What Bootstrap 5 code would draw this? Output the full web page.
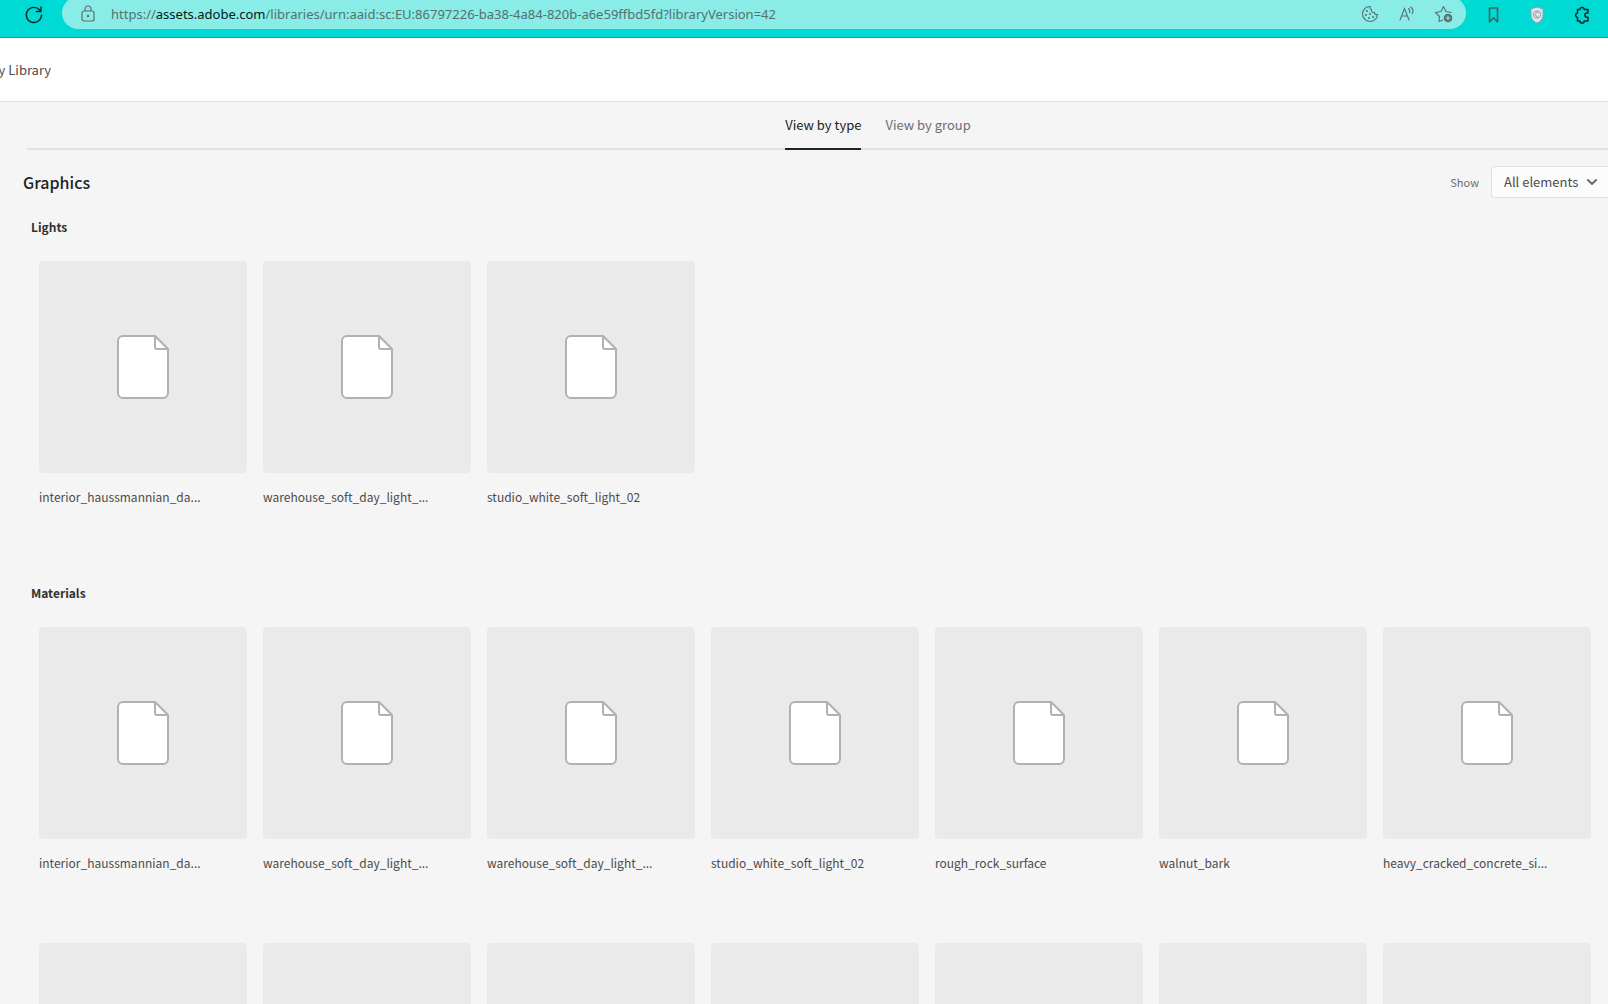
<!DOCTYPE html>
<html lang="en">
<head>
<meta charset="utf-8">
<meta name="viewport" content="width=device-width, initial-scale=1">
<title>My Library</title>
<link href="https://cdn.jsdelivr.net/npm/bootstrap@5.3.0/dist/css/bootstrap.min.css" rel="stylesheet">
<style>
body{font-family:"Noto Sans CJK SC","Open Sans",sans-serif;font-size:13px;line-height:20px;color:#4b4b4b;background:#f5f5f5}
.browser-bar{background:#00dad4;border-bottom:1px solid #00a9a6;height:38px;gap:18px;padding:0 16px 8px 24px}
.browser-bar .btn{width:20px;height:20px;line-height:0}
.browser-bar svg{display:block}
.address{background:#8aece6;height:32px;margin-top:-4px;padding:2px 12px 0 17px;color:#5a7472}
.address-text{font-family:"Noto Sans",sans-serif;font-size:13px;color:#52716f;outline:0;margin-left:12px}
.address-text b{font-weight:400;color:#00201f}
.address-tools{gap:17px}
.browser-tools{gap:24px}
.app-head{height:64px;border-bottom:1px solid #e1e1e1}
.crumb{margin-left:-12px;color:#4b4b4b}
.view-tabs{margin-left:27px;padding-left:121px;border-bottom:2px solid #e1e1e1;gap:24px}
.view-tabs .nav-link{padding:13px 0;border-bottom:2px solid transparent;margin-bottom:-2px;color:#6e6e6e;line-height:20px}
.view-tabs .nav-link.active{color:#222;border-color:#222}
.toolbar{padding:16px 0 13px 23px}
.toolbar h1{font-size:16px;line-height:24px;font-weight:500;color:#222}
.toolbar label{font-size:11px;color:#6e6e6e}
.filter{width:117px;height:32px;padding:0 28px 0 12px;font-size:13px;color:#4b4b4b;background-color:#fcfcfc;border:1px solid #e1e1e1;border-right:0;border-radius:4px 0 0 4px;background-position:right 10px center;background-size:12px 12px;background-image:url("data:image/svg+xml,%3Csvg xmlns='http://www.w3.org/2000/svg' viewBox='0 0 12 12'%3E%3Cpath d='M2 4l4 4 4-4' fill='none' stroke='%236e6e6e' stroke-width='2' stroke-linecap='round' stroke-linejoin='round'/%3E%3C/svg%3E")}
.group-title{font-size:12px;line-height:20px;font-weight:700;color:#323232;padding:6px 0 24px 31px}
.tiles{display:grid;grid-template-columns:repeat(7,minmax(0,1fr));column-gap:16px;padding:0 17px 0 39px}
.tile{height:316px}
.thumb{height:212px;border-radius:4px;background:#eaeaea}
.caption-text{margin-top:14px;font-size:12px;line-height:20px;color:#4b4b4b}
</style>
</head>
<body class="vh-100 overflow-hidden">
<svg class="d-none" aria-hidden="true">
  <symbol id="file" viewBox="0 0 52 64"><path d="M6 1H38L51 14V58a5 5 0 0 1-5 5H6a5 5 0 0 1-5-5V6a5 5 0 0 1 5-5Z" fill="#fff" stroke="#b1b1b1" stroke-width="2"/><path d="M38 1V12a2 2 0 0 0 2 2H51" fill="none" stroke="#b1b1b1" stroke-width="2"/></symbol>
</svg>

<div class="browser-bar d-flex align-items-center">
  <button class="btn p-0 border-0" type="button" aria-label="Reload"><svg width="20" height="20" viewBox="0 0 20 20" fill="none" stroke="#062a2a" stroke-width="1.4" stroke-linecap="round"><path d="M17.500 10A7.600 7.600 0 1 1 15.500 4.800L17 6.500M17 2v4.500h-4.500"/></svg></button>
  <div class="address flex-grow-1 rounded-pill d-flex align-items-center">
    <button class="btn p-0 border-0" type="button" aria-label="Site information"><svg width="18" height="20" viewBox="0 0 18 20" fill="none" stroke="#5b6f6e" stroke-width="1.2"><rect x="3" y="7" width="12" height="10" rx="2"/><path d="M6 7V5a3 3 0 0 1 6 0V7"/><circle cx="9" cy="12" r=".7" fill="#5b6f6e"/></svg></button>
    <div class="address-text flex-grow-1" role="textbox" contenteditable="true" spellcheck="false" aria-label="Address">https://<b>assets.adobe.com</b>/libraries/urn:aaid:sc:EU:86797226-ba38-4a84-820b-a6e59ffbd5fd?libraryVersion=42</div>
    <div class="address-tools d-flex">
      <button class="btn p-0 border-0" type="button" aria-label="Cookies"><svg width="20" height="20" viewBox="0 0 20 20" fill="none" stroke="#5b6f6e" stroke-width="1.1"><path d="M10 2.500A7.500 7.500 0 1 0 17.500 10.500C15.500 11 14.300 10 14.500 8.500C12.500 8.700 11 7.500 11.500 5.500C10 5 9.600 3.800 10 2.500Z"/><g fill="#5b6f6e" stroke="none"><circle cx="7" cy="7" r="1"/><circle cx="6" cy="11" r="1"/><circle cx="10" cy="10" r="1"/><circle cx="9" cy="14" r="1"/><circle cx="13" cy="13" r="1"/></g></svg></button>
      <button class="btn p-0 border-0" type="button" aria-label="Read aloud"><svg width="20" height="20" viewBox="0 0 20 20" fill="none" stroke="#5b6f6e" stroke-width="1.1" stroke-linecap="round"><path d="M3 16 7.500 4.500 12 16M4.600 12h5.800M11.500 4.500c1.300 1 1.500 2.500 1 4M13.700 3c2.300 1.700 2.700 4.500 1.500 6.800"/></svg></button>
      <button class="btn p-0 border-0" type="button" aria-label="Add to favorites"><svg width="20" height="20" viewBox="0 0 20 20" fill="none" stroke="#5b6f6e" stroke-width="1.1" stroke-linejoin="round"><path d="M9 16 5 17.500 5.500 12.500 1.500 8.500 7 7.500 9.500 2.500 12 7.500 17.500 8.500"/><circle cx="14" cy="14" r="4.300" fill="#5b6f6e" stroke="none"/><path d="M14 11.700v4.600M11.700 14h4.600" stroke="#8aece6" stroke-width="1.200"/></svg></button>
    </div>
  </div>
  <div class="browser-tools d-flex">
    <button class="btn p-0 border-0" type="button" aria-label="Collections"><svg width="20" height="20" viewBox="0 0 20 20" fill="none" stroke="#3c6665" stroke-width="1.600" stroke-linejoin="round"><path d="M5.500 3h8v14L9.500 12.800 5.500 17Z"/></svg></button>
    <button class="btn p-0 border-0" type="button" aria-label="Shield"><svg width="20" height="20" viewBox="0 0 20 20"><path d="M9 2 15 4V10c0 4-2.500 6.500-6 8-3.500-1.500-6-4-6-8V4Z" fill="#dbe4ec" stroke="#8ba7b3"/><circle cx="9" cy="9.500" r="3.500" fill="#f2f5f7" stroke="#8a97a8"/><path d="M10.500 8.500a1.800 1.800 0 1 0 0 2" fill="none" stroke="#8a97a8"/></svg></button>
    <button class="btn p-0 border-0" type="button" aria-label="Extensions"><svg width="20" height="20" viewBox="0 0 20 20" fill="none" stroke="#062a2a" stroke-width="1.500" stroke-linejoin="round" stroke-linecap="round"><path d="M5.500 4.500H8a2.100 2.100 0 0 1 4.200 0H16V8H15a2 2 0 0 0 0 4.200H16V16H12.200a2.100 2.100 0 0 1-4.200 0H5.500V12.500a2.300 2.300 0 0 1 0-4.500Z"/></svg></button>
  </div>
</div>

<header class="app-head bg-white d-flex align-items-center overflow-hidden"><span class="crumb">My Library</span></header>

<main>
  <ul class="nav view-tabs justify-content-center">
    <li class="nav-item"><a class="nav-link active" href="#type" aria-current="page">View by type</a></li>
    <li class="nav-item"><a class="nav-link" href="#group">View by group</a></li>
  </ul>
  <div class="toolbar d-flex align-items-center">
    <h1 class="m-0 me-auto">Graphics</h1>
    <label class="me-2 pe-1" for="show">Show</label>
    <select class="form-select filter" id="show"><option>All elements</option></select>
  </div>

  <section>
    <h2 class="group-title m-0">Lights</h2>
    <div class="tiles">
      <div class="tile"><div class="thumb d-flex align-items-center justify-content-center"><svg width="52" height="64"><use href="#file"/></svg></div><div class="caption-text text-nowrap">interior_haussmannian_da...</div></div>
      <div class="tile"><div class="thumb d-flex align-items-center justify-content-center"><svg width="52" height="64"><use href="#file"/></svg></div><div class="caption-text text-nowrap">warehouse_soft_day_light_...</div></div>
      <div class="tile"><div class="thumb d-flex align-items-center justify-content-center"><svg width="52" height="64"><use href="#file"/></svg></div><div class="caption-text text-nowrap">studio_white_soft_light_02</div></div>
    </div>
  </section>

  <section>
    <h2 class="group-title m-0">Materials</h2>
    <div class="tiles">
      <div class="tile"><div class="thumb d-flex align-items-center justify-content-center"><svg width="52" height="64"><use href="#file"/></svg></div><div class="caption-text text-nowrap">interior_haussmannian_da...</div></div>
      <div class="tile"><div class="thumb d-flex align-items-center justify-content-center"><svg width="52" height="64"><use href="#file"/></svg></div><div class="caption-text text-nowrap">warehouse_soft_day_light_...</div></div>
      <div class="tile"><div class="thumb d-flex align-items-center justify-content-center"><svg width="52" height="64"><use href="#file"/></svg></div><div class="caption-text text-nowrap">warehouse_soft_day_light_...</div></div>
      <div class="tile"><div class="thumb d-flex align-items-center justify-content-center"><svg width="52" height="64"><use href="#file"/></svg></div><div class="caption-text text-nowrap">studio_white_soft_light_02</div></div>
      <div class="tile"><div class="thumb d-flex align-items-center justify-content-center"><svg width="52" height="64"><use href="#file"/></svg></div><div class="caption-text text-nowrap">rough_rock_surface</div></div>
      <div class="tile"><div class="thumb d-flex align-items-center justify-content-center"><svg width="52" height="64"><use href="#file"/></svg></div><div class="caption-text text-nowrap">walnut_bark</div></div>
      <div class="tile"><div class="thumb d-flex align-items-center justify-content-center"><svg width="52" height="64"><use href="#file"/></svg></div><div class="caption-text text-nowrap">heavy_cracked_concrete_si...</div></div>
      <div class="tile"><div class="thumb"></div></div>
      <div class="tile"><div class="thumb"></div></div>
      <div class="tile"><div class="thumb"></div></div>
      <div class="tile"><div class="thumb"></div></div>
      <div class="tile"><div class="thumb"></div></div>
      <div class="tile"><div class="thumb"></div></div>
      <div class="tile"><div class="thumb"></div></div>
    </div>
  </section>
</main>
<script src="https://cdn.jsdelivr.net/npm/bootstrap@5.3.0/dist/js/bootstrap.bundle.min.js"></script>
</body>
</html>
